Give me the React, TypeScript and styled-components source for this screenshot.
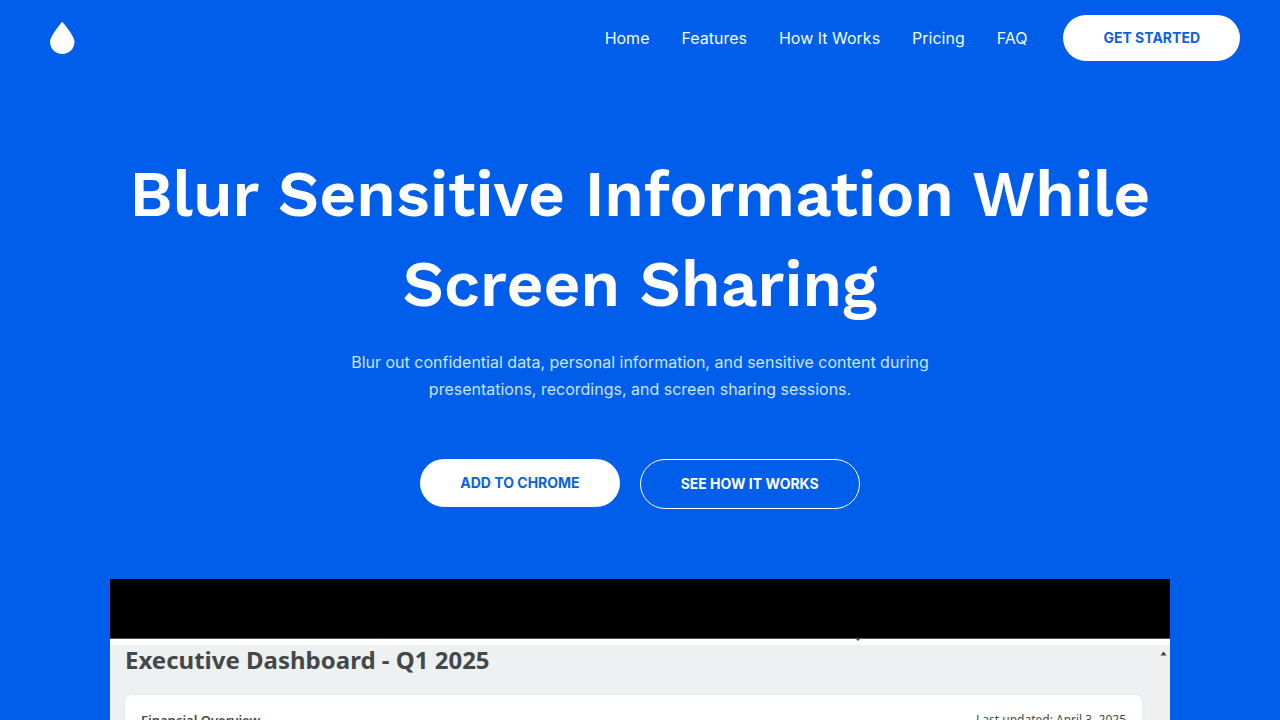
import React from "react";
import styled, { createGlobalStyle } from "styled-components";

const GlobalStyle = createGlobalStyle`
  *, *::before, *::after { box-sizing: border-box; }
  body {
    margin: 0;
    background: #005eea;
    color: #ffffff;
    font-family: Inter, "Liberation Sans", sans-serif;
    font-size: 16px;
  }
  h1, h2, h3, p { margin: 0; }
`;

const Page = styled.div`
  display: flex;
  flex-direction: column;
  min-height: 100vh;
`;

const Header = styled.header`
  display: flex;
  flex-shrink: 0;
  align-items: center;
  justify-content: space-between;
  padding: 15px 40px 15px 50px;
`;

const Logo = styled.a`
  display: flex;
  color: #ffffff;
`;

const HeaderEnd = styled.div`
  display: flex;
  align-items: center;
  gap: 36px;
`;

const Nav = styled.nav`
  display: flex;
  gap: 32px;
`;

const NavLink = styled.a`
  color: #f0fbff;
  font-size: 16px;
  line-height: 24px;
  text-decoration: none;
`;

const Button = styled.button<{ $outline?: boolean; $compact?: boolean }>`
  padding: ${(p) => (p.$compact ? 13 : 14)}px 40px;
  border: ${(p) => (p.$outline ? "1px solid #ffffff" : "0")};
  border-radius: 25px;
  background: ${(p) => (p.$outline ? "transparent" : "#ffffff")};
  color: ${(p) => (p.$outline ? "#ffffff" : "#0a63dc")};
  font-family: inherit;
  font-size: 14px;
  font-weight: 700;
  line-height: 20px;
  text-transform: uppercase;
  white-space: nowrap;
  cursor: pointer;
`;

const Hero = styled.main`
  display: flex;
  flex-direction: column;
  align-items: center;
  padding: 73px 40px 0;
  text-align: center;
`;

const Title = styled.h1`
  max-width: 1060px;
  font-family: "Work Sans", Inter, sans-serif;
  font-size: 64px;
  font-weight: 600;
  line-height: 90px;
`;

const Lead = styled.p`
  max-width: 600px;
  margin-top: 20px;
  color: #c8e4ff;
  line-height: 27px;
`;

const Actions = styled.div`
  display: flex;
  align-items: flex-start;
  gap: 20px;
  margin-top: 56px;
`;

const Demo = styled.section`
  width: 100%;
  max-width: 1060px;
  margin-top: 70px;
  padding-top: 59px;
  background: #000000;
  color: #454848;
  font-family: "Noto Sans", "Open Sans", sans-serif;
  text-align: left;
`;

const BrowserEdge = styled.div`
  display: flex;
  height: 7px;
  padding-right: 308px;
  justify-content: flex-end;
  border-top: 1px solid #555555;
  background: #ffffff;
`;

const Screen = styled.div`
  display: flex;
  background: #edf1f2;
`;

const Dashboard = styled.div`
  flex: 1;
  padding: 0 12px 16px 15px;
`;

const DashboardTitle = styled.h2`
  font-size: 24px;
  font-weight: 700;
  line-height: 30px;
`;

const Card = styled.div`
  display: flex;
  justify-content: space-between;
  margin-top: 20px;
  padding: 15px 16px 48px;
  border-radius: 7px;
  background: #ffffff;
  box-shadow: 0 1px 4px #e2e6e7;
  line-height: 20px;
`;

const CardTitle = styled.h3`
  font-size: 13px;
  font-weight: 600;
  line-height: 20px;
`;

const Updated = styled.span`
  font-size: 12px;
`;

const ScrollTrack = styled.div`
  display: flex;
  width: 16px;
  padding: 6px 3px 0 0;
  justify-content: flex-end;
  background: #f0f0f0;
`;

const links = ["Home", "Features", "How It Works", "Pricing", "FAQ"];

export default function App() {
  return (
    <Page>
      <GlobalStyle />
      <Header>
        <Logo href="#home" aria-label="Home page">
          <svg width="25" height="34" viewBox="0 0 25 34" fill="currentColor" aria-hidden="true">
            <path d="M12.2 1C12.7 1 24.5 15.2 24.5 20.8C24.5 27.8 19.1 33 12.2 33C5.3 33 0 27.8 0 20.8C0 15.2 11.7 1 12.2 1Z" />
          </svg>
        </Logo>
        <HeaderEnd>
          <Nav>
            {links.map((label) => (
              <NavLink key={label} href={"#" + label.toLowerCase().replace(/ /g, "-")}>
                {label}
              </NavLink>
            ))}
          </Nav>
          <Button type="button" $compact>Get Started</Button>
        </HeaderEnd>
      </Header>
      <Hero>
        <Title>Blur Sensitive Information While Screen Sharing</Title>
        <Lead>
          Blur out confidential data, personal information, and sensitive content during
          presentations, recordings, and screen sharing sessions.
        </Lead>
        <Actions>
          <Button type="button">Add to Chrome</Button>
          <Button type="button" $outline>See How It Works</Button>
        </Actions>
        <Demo>
          <BrowserEdge>
            <svg width="8" height="3" viewBox="0 0 8 3" fill="#444444" aria-hidden="true">
              <path d="M2 0H6L4 2Z" />
            </svg>
          </BrowserEdge>
          <Screen>
            <Dashboard>
              <DashboardTitle>Executive Dashboard - Q1 2025</DashboardTitle>
              <Card>
                <CardTitle>Financial Overview</CardTitle>
                <Updated>Last updated: April 3, 2025</Updated>
              </Card>
            </Dashboard>
            <ScrollTrack>
              <svg width="7" height="5" viewBox="0 0 7 5" fill="#444444" aria-hidden="true">
                <path d="M0.5 4.5L3 1H4L6.5 4.5Z" />
              </svg>
            </ScrollTrack>
          </Screen>
        </Demo>
      </Hero>
    </Page>
  );
}
